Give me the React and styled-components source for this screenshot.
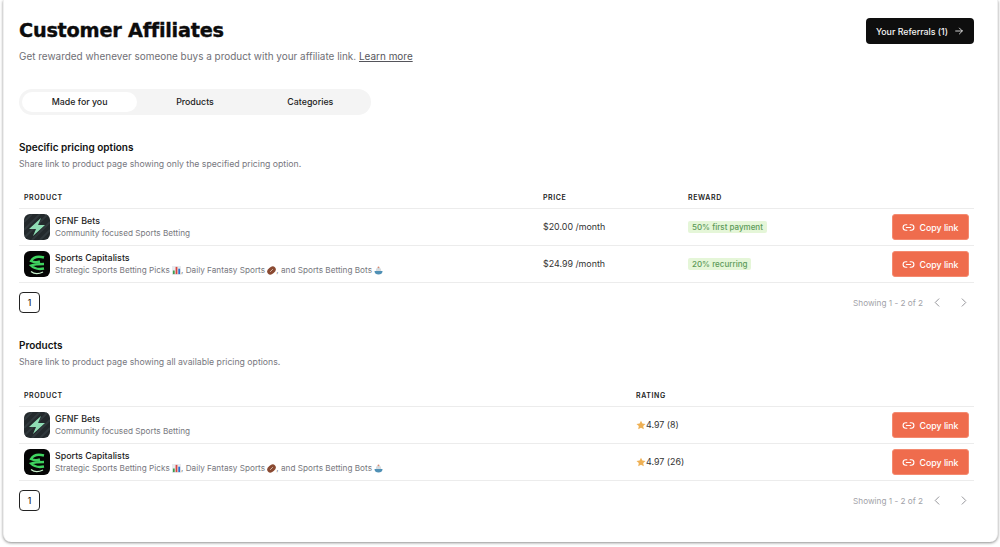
import React from 'react';
import styled, { createGlobalStyle } from 'styled-components';

const GlobalStyle = createGlobalStyle`
  html, body { margin: 0; padding: 0; background: #fff; }
  body { font-family: Inter, "Liberation Sans", sans-serif; color: #111; }
  * { box-sizing: border-box; }
`;

const Page = styled.div`
  height: 547px;
  padding: 0 2px 5px 3px;
`;

const Card = styled.main`
  height: 100%;
  background: #fff;
  border-radius: 0 0 8px 8px;
  border-left: 1px solid #efefef;
  border-right: 1px solid #efefef;
  box-shadow: 0 1px 3px rgba(0, 0, 0, 0.45);
  padding: 15px 23px 0 15px;
`;

const Header = styled.header`
  display: flex;
  justify-content: space-between;
  align-items: flex-start;
`;

const Title = styled.h1`
  margin: 0;
  padding-top: 1px;
  font-family: "DejaVu Sans", Inter, sans-serif;
  font-size: 19.3px;
  line-height: 30px;
  font-weight: 700;
  letter-spacing: -0.25px;
  -webkit-text-stroke: 0.35px #0c0c0c;
  color: #0c0c0c;
`;

const Subtitle = styled.p`
  margin: 1.5px 0 0;
  font-size: 9.95px;
  line-height: 16px;
  color: #6f6f76;
  a { color: #55555b; text-decoration: underline; }
`;

const DarkButton = styled.button`
  display: flex;
  align-items: center;
  gap: 6px;
  height: 26px;
  margin-top: 3px;
  padding: 0 10px;
  border: 0;
  border-radius: 4px;
  background: #0e0e0e;
  color: #f4f4f4;
  font: 500 8.8px Inter, sans-serif;
`;

const TabBar = styled.div`
  display: flex;
  width: 352px;
  height: 26px;
  margin-top: 25.5px;
  padding: 3px;
  border-radius: 13px;
  background: #f4f4f4;
`;

const Tab = styled.div`
  flex: 1;
  display: flex;
  align-items: center;
  justify-content: center;
  border-radius: 10px;
  padding-bottom: 1px;
  font-size: 8.8px;
  font-weight: 500;
  color: #222;
  background: ${({ $active }) => ($active ? '#fff' : 'transparent')};
`;

const Section = styled.section`
  margin-top: 24px;
`;

const SectionTitle = styled.h2`
  margin: 0;
  font-size: 10px;
  line-height: 16px;
  font-weight: 600;
  color: #111;
`;

const SectionText = styled.p`
  margin: 2px 0 0;
  font-size: 8.7px;
  line-height: 14px;
  color: #77777e;
`;

const Row = styled.div`
  display: grid;
  grid-template-columns: ${({ $cols }) => $cols};
  align-items: center;
  border-bottom: 1px solid #ececec;
`;

const HeadRow = styled(Row)`
  height: 19px;
  margin-top: 19px;
  padding-bottom: 3px;
`;

const BodyRow = styled(Row)`
  height: 37px;
`;

const HeadCell = styled.div`
  padding-left: 5px;
  font-size: 7px;
  font-weight: 600;
  letter-spacing: 0.6px;
  color: #222;
`;

const Cell = styled.div`
  padding-left: 5px;
  padding-bottom: 1px;
  font-size: 8.9px;
  color: #333;
  display: flex;
  align-items: center;
`;

const ActionCell = styled(Cell)`
  justify-content: flex-end;
  padding-right: 5px;
  padding-bottom: 0;
`;

const ProductCell = styled(Cell)`
  gap: 5px;
  padding-bottom: 0;
`;

const Logo = styled.svg`
  flex: none;
  width: 26px;
  height: 26px;
  border-radius: 6px;
`;

const Name = styled.div`
  font-size: 8.9px;
  line-height: 12px;
  font-weight: 500;
  color: #1c1c1c;
`;

const Tagline = styled.div`
  display: flex;
  align-items: center;
  font-size: 8.2px;
  line-height: 12px;
  color: #77777e;
`;

const Reward = styled.span`
  padding: 1px 4px;
  border-radius: 2px;
  background: #e5f6d8;
  color: #5c9a58;
  font-size: 8px;
  font-weight: 500;
  line-height: 10px;
`;

const Rating = styled.span`
  display: flex;
  align-items: center;
`;

const CopyButton = styled.button`
  display: flex;
  align-items: center;
  justify-content: center;
  gap: 4px;
  width: 77px;
  height: 26px;
  border: 1px solid #f48a70;
  border-radius: 3px;
  background: #ef6c4d;
  color: #fff;
  font: 500 8.8px Inter, sans-serif;
`;

const Pagination = styled.div`
  display: flex;
  align-items: center;
  justify-content: space-between;
  margin-top: 9px;
`;

const PageBox = styled.div`
  width: 21px;
  height: 21px;
  display: flex;
  align-items: center;
  justify-content: center;
  border: 1.2px solid #222;
  border-radius: 4px;
  font-size: 8.5px;
  font-weight: 500;
  color: #222;
`;

const PageInfo = styled.div`
  display: flex;
  align-items: center;
  gap: 9px;
  padding-right: 5px;
  font-size: 8.2px;
  color: #a2a2a8;
`;

const Chevrons = styled.div`
  display: flex;
  gap: 15px;
  color: #8c8c92;
`;

const BoltLogo = () => (
  <Logo viewBox="0 0 26 26">
    <rect width="26" height="26" fill="#23292c" />
    <path d="M0 8 8 0M0 16 16 0M0 24 24 0M8 26 26 8M16 26 26 16" stroke="#30383c" strokeWidth="2" />
    <path d="M17 4 5 15h7L9 22l12-11h-7Z" fill="#8fdcb4" />
  </Logo>
);

const ClawLogo = () => (
  <Logo viewBox="0 0 26 26">
    <rect width="26" height="26" fill="#050505" />
    <path d="M20 6.500C14 5 9 6.500 7 10c3 1.500 6 1.500 9 .5" fill="none" stroke="#3fd35f" strokeWidth="2.400" />
    <path d="M20 13c-4 0-9 0-13 1.500 3 3 8 4 13 3" fill="none" stroke="#3fd35f" strokeWidth="2.400" />
    <path d="M7 20.500c3 2.500 8 2.500 12 .5" fill="none" stroke="#c8f0cc" strokeWidth="1.300" />
  </Logo>
);

const ChartEmoji = () => (
  <svg width="9" height="9" viewBox="0 0 10 10">
    <rect width="10" height="10" fill="#e8ebef" />
    <rect x="1" y="5" width="2" height="4" fill="#3f9a4d" />
    <rect x="4" y="1" width="2" height="8" fill="#d9443f" />
    <rect x="7" y="3" width="2" height="6" fill="#2f6fcb" />
  </svg>
);

const FootballEmoji = () => (
  <svg width="9" height="9" viewBox="0 0 10 10">
    <ellipse cx="5" cy="5" rx="5.200" ry="3.800" transform="rotate(-40 5 5)" fill="#8a4a32" />
    <path d="M3.500 6.500 6.500 3.500" stroke="#efe3da" strokeWidth="0.800" />
  </svg>
);

const RobotEmoji = () => (
  <svg width="9" height="9" viewBox="0 0 10 10">
    <path d="M0.500 5.500h9C9.500 8 7.500 9.500 5 9.500S.5 8 .5 5.500Z" fill="#4f90b5" />
    <path d="M2 5.500C2 3 3.500 1.500 5 1.500S8 3 8 5.500Z" fill="#d5dade" />
    <circle cx="5" cy="1.500" r="1" fill="#d9896f" />
  </svg>
);

const LinkIcon = () => (
  <svg width="13" height="13" viewBox="0 0 24 24" fill="none" stroke="currentColor" strokeWidth="2" strokeLinecap="round">
    <path d="M9 17H7A5 5 0 0 1 7 7h2" />
    <path d="M15 7h2a5 5 0 1 1 0 10h-2" />
    <line x1="8" y1="12" x2="16" y2="12" />
  </svg>
);

const ArrowIcon = () => (
  <svg width="10" height="10" viewBox="0 0 24 24" fill="none" stroke="currentColor" strokeWidth="2" strokeLinecap="round" strokeLinejoin="round">
    <path d="M4 12h16M13 5l7 7-7 7" />
  </svg>
);

const Chevron = ({ left }) => (
  <svg width="11" height="11" viewBox="0 0 24 24" fill="none" stroke="currentColor" strokeWidth="2" strokeLinecap="round" strokeLinejoin="round">
    <path d={left ? 'M15 4l-8 8 8 8' : 'M9 4l8 8-8 8'} />
  </svg>
);

const Star = () => (
  <svg width="10" height="10" viewBox="0 0 24 24" fill="#eeb054">
    <path d="M12 1.500l3.300 6.900 7.500 1-5.500 5.200 1.400 7.500L12 18.400l-6.700 3.700 1.400-7.500L1.200 9.400l7.500-1z" />
  </svg>
);

const products = {
  gfnf: { name: 'GFNF Bets', logo: <BoltLogo />, tagline: 'Community focused Sports Betting' },
  capitalists: {
    name: 'Sports Capitalists',
    logo: <ClawLogo />,
    tagline: (
      <>
        Strategic Sports Betting Picks&nbsp;<ChartEmoji />, Daily Fantasy Sports&nbsp;<FootballEmoji />, and Sports Betting Bots&nbsp;<RobotEmoji />
      </>
    ),
  },
};

const Product = ({ item }) => (
  <ProductCell>
    {item.logo}
    <div>
      <Name>{item.name}</Name>
      <Tagline>{item.tagline}</Tagline>
    </div>
  </ProductCell>
);

const Copy = () => (
  <ActionCell>
    <CopyButton><LinkIcon />Copy link</CopyButton>
  </ActionCell>
);

const Footer = () => (
  <Pagination>
    <PageBox>1</PageBox>
    <PageInfo>
      Showing 1 - 2 of 2
      <Chevrons><Chevron left /><Chevron /></Chevrons>
    </PageInfo>
  </Pagination>
);

const priceCols = '519px 145px 1fr auto';
const ratingCols = '612px 1fr auto';

export default function App() {
  return (
    <Page>
      <GlobalStyle />
      <Card>
        <Header>
          <div>
            <Title>Customer Affiliates</Title>
            <Subtitle>
              Get rewarded whenever someone buys a product with your affiliate link. <a href="#learn">Learn more</a>
            </Subtitle>
          </div>
          <DarkButton>Your Referrals (1) <ArrowIcon /></DarkButton>
        </Header>

        <TabBar>
          <Tab $active>Made for you</Tab>
          <Tab>Products</Tab>
          <Tab>Categories</Tab>
        </TabBar>

        <Section>
          <SectionTitle>Specific pricing options</SectionTitle>
          <SectionText>Share link to product page showing only the specified pricing option.</SectionText>
          <HeadRow $cols={priceCols}>
            <HeadCell>PRODUCT</HeadCell>
            <HeadCell>PRICE</HeadCell>
            <HeadCell>REWARD</HeadCell>
          </HeadRow>
          <BodyRow $cols={priceCols}>
            <Product item={products.gfnf} />
            <Cell>$20.00 /month</Cell>
            <Cell><Reward>50% first payment</Reward></Cell>
            <Copy />
          </BodyRow>
          <BodyRow $cols={priceCols}>
            <Product item={products.capitalists} />
            <Cell>$24.99 /month</Cell>
            <Cell><Reward>20% recurring</Reward></Cell>
            <Copy />
          </BodyRow>
          <Footer />
        </Section>

        <Section>
          <SectionTitle>Products</SectionTitle>
          <SectionText>Share link to product page showing all available pricing options.</SectionText>
          <HeadRow $cols={ratingCols}>
            <HeadCell>PRODUCT</HeadCell>
            <HeadCell>RATING</HeadCell>
          </HeadRow>
          <BodyRow $cols={ratingCols}>
            <Product item={products.gfnf} />
            <Cell><Rating><Star />4.97 (8)</Rating></Cell>
            <Copy />
          </BodyRow>
          <BodyRow $cols={ratingCols}>
            <Product item={products.capitalists} />
            <Cell><Rating><Star />4.97 (26)</Rating></Cell>
            <Copy />
          </BodyRow>
          <Footer />
        </Section>
      </Card>
    </Page>
  );
}
